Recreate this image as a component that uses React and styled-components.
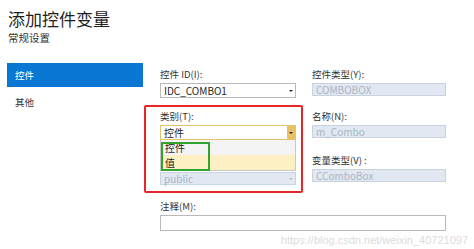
import React from 'react'
import styled, { createGlobalStyle } from 'styled-components'

const GlobalStyle = createGlobalStyle`
    html, body {
        margin: 0;
        padding: 0;
        background: #ffffff;
    }
    body {
        font-family: "Noto Sans CJK SC", "Noto Sans", sans-serif;
        color: #2b2b2b;
    }
`

const Page = styled.div`
    position: relative;
    width: 474px;
    height: 249px;
    overflow: hidden;
    background: #fff;
`

const Header = styled.div`
    padding: 10px 0 0 8px;
    height: 63px;
    box-sizing: border-box;
`

const Title = styled.h1`
    margin: 0;
    font-size: 17px;
    line-height: 18px;
    font-weight: 400;
    color: #1f1f1f;
`

const Subtitle = styled.div`
    margin-top: 4px;
    font-size: 10.5px;
    line-height: 11px;
    color: #333;
`

const Body = styled.div`
    display: flex;
`

const Sidebar = styled.div`
    width: 136px;
    margin-left: 7px;
    display: flex;
    flex-direction: column;
`

const NavItem = styled.div`
    height: 24px;
    padding-left: 8px;
    display: flex;
    align-items: center;
    font-size: 9.5px;
    background: ${p => (p.$active ? '#0a78d2' : 'transparent')};
    color: ${p => (p.$active ? '#ffffff' : '#333')};
    margin-bottom: 3px;
`

const Content = styled.div`
    position: relative;
    margin-left: 17px;
    padding-top: 4px;
    display: grid;
    grid-template-columns: 136px 134px;
    column-gap: 16px;
    row-gap: 11px;
`

const Field = styled.div`
    display: flex;
    flex-direction: column;
    grid-column: ${p => (p.$wide ? '1 / 3' : 'auto')};
    margin-top: ${p => p.$shift || 0}px;
    position: relative;
`

const Label = styled.div`
    font-size: 9.5px;
    line-height: 14px;
    height: 14px;
    margin-bottom: 2px;
    color: #333;
`

const Box = styled.div`
    height: ${p => p.$h || 15}px;
    box-sizing: border-box;
    border: 1px solid ${p => (p.$disabled ? '#c9d3e0' : p.$focus ? '#e3c36a' : '#b9b9b9')};
    background: ${p => (p.$disabled ? '#e2e8f1' : '#ffffff')};
    color: ${p => (p.$disabled ? '#a9b5c5' : '#1f1f1f')};
    font-size: 10px;
    line-height: 12px;
    padding-left: 3px;
    display: flex;
    align-items: center;
    justify-content: space-between;
`

const Arrow = styled.span`
    width: 8px;
    height: 100%;
    display: flex;
    align-items: center;
    justify-content: center;
    background: ${p => (p.$focus ? '#e8c065' : 'transparent')};
    &::after {
        content: '';
        border-left: 2px solid transparent;
        border-right: 2px solid transparent;
        border-top: 2px solid ${p => (p.$muted ? '#b8c2cf' : '#222')};
    }
`

const DropList = styled.div`
    position: absolute;
    left: 0;
    right: 0;
    top: 31px;
    height: 31px;
    border: 1px solid #c8c8c8;
    border-top: none;
    background: #f4f4f4;
    z-index: 2;
    box-sizing: border-box;
`

const DropItem = styled.div`
    height: 15px;
    padding-left: 4px;
    font-size: 10px;
    line-height: 15px;
    color: #1f1f1f;
    background: ${p => (p.$hover ? '#fdf1c3' : 'transparent')};
`

const RedMark = styled.div`
    position: absolute;
    left: -16px;
    top: 42px;
    width: 159px;
    height: 88px;
    border: 2px solid #e8262a;
    box-sizing: border-box;
    border-radius: 2px;
    pointer-events: none;
`

const GreenMark = styled.div`
    position: absolute;
    left: 1px;
    top: 33px;
    width: 49px;
    height: 29px;
    border: 2px solid #2fa52f;
    box-sizing: border-box;
    z-index: 3;
    pointer-events: none;
`

const Watermark = styled.div`
    position: absolute;
    right: 6px;
    bottom: 3px;
    font-family: "Liberation Sans", Arial, sans-serif;
    font-size: 11px;
    color: #dcdcdc;
`

const App = () => {
    return (
        <Page>
            <GlobalStyle />
            <Header>
                <Title>添加控件变量</Title>
                <Subtitle>常规设置</Subtitle>
            </Header>
            <Body>
                <Sidebar>
                    <NavItem $active>控件</NavItem>
                    <NavItem>其他</NavItem>
                </Sidebar>
                <Content>
                    <Field>
                        <Label>控件 ID(I):</Label>
                        <Box>IDC_COMBO1<Arrow /></Box>
                    </Field>
                    <Field>
                        <Label>控件类型(Y):</Label>
                        <Box $disabled $h={13}>COMBOBOX</Box>
                    </Field>
                    <Field>
                        <Label>类别(T):</Label>
                        <Box $focus>控件<Arrow $focus /></Box>
                        <DropList>
                            <DropItem>控件</DropItem>
                            <DropItem $hover>值</DropItem>
                        </DropList>
                        <GreenMark />
                    </Field>
                    <Field>
                        <Label>名称(N):</Label>
                        <Box $disabled $h={13}>m_Combo</Box>
                    </Field>
                    <Field $shift={5}>
                        <Label> </Label>
                        <Box $disabled $h={13}>public<Arrow $muted /></Box>
                    </Field>
                    <Field $shift={2}>
                        <Label>变量类型(V) :</Label>
                        <Box $disabled $h={13}>CComboBox</Box>
                    </Field>
                    <Field $wide $shift={3}>
                        <Label>注释(M):</Label>
                        <Box $h={16} />
                    </Field>
                    <RedMark />
                </Content>
            </Body>
            <Watermark>https://blog.csdn.net/weixin_40721097</Watermark>
        </Page>
    )
}

export default App
